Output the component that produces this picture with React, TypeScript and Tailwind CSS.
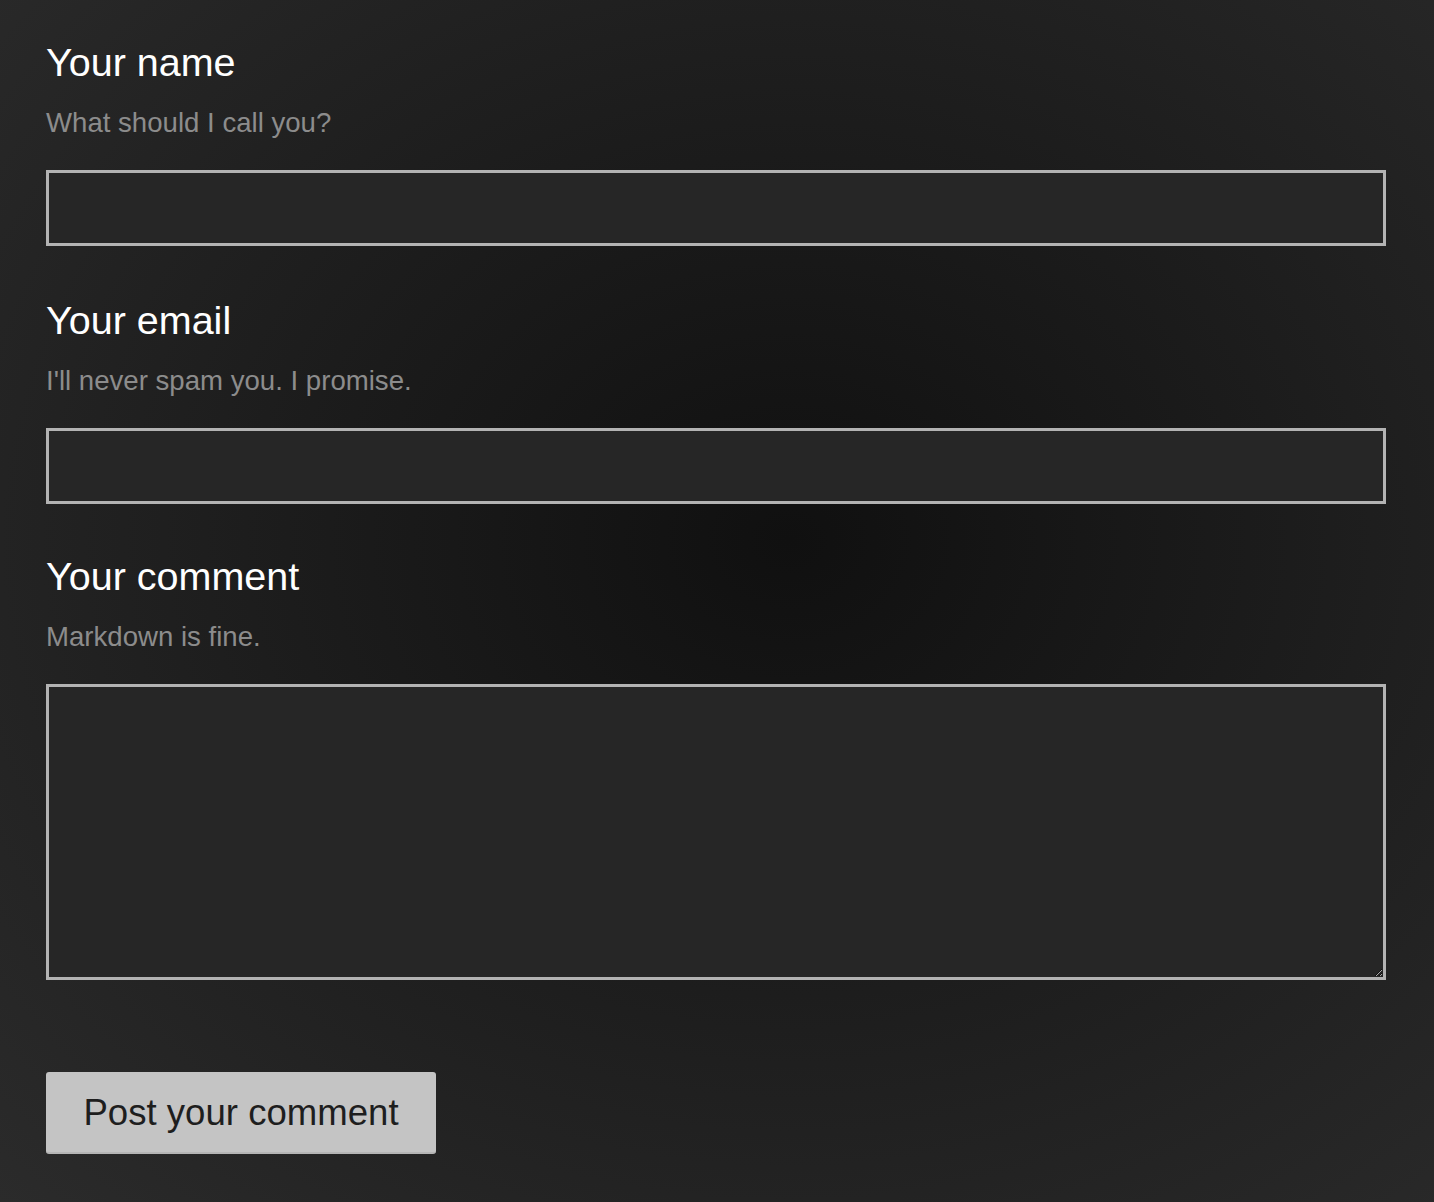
const fields = [
  { id: "name", title: "Your name", hint: "What should I call you?", kind: "input", gap: "" },
  { id: "email", title: "Your email", hint: "I'll never spam you. I promise.", kind: "input", gap: "mt-[50px]" },
  { id: "comment", title: "Your comment", hint: "Markdown is fine.", kind: "textarea", gap: "mt-[48px]" },
] as const;

export default function App() {
  return (
    <div
      className="min-h-screen bg-[radial-gradient(ellipse_at_55%_45%,#101010_0%,#1c1c1c_45%,#2b2b2b_100%)] pl-[46px] pr-[48px] pt-[38px] pb-[48px]"
      style={{ fontFamily: '"Liberation Sans", Arial, sans-serif' }}
    >
      <form className="flex flex-col">
        {fields.map((field) => (
          <div key={field.id} className={field.gap}>
            <label htmlFor={field.id} className="block text-[39.5px] leading-[48px] text-white">
              {field.title}
            </label>
            <p className="mt-[21px] text-[27.6px] leading-[32px] text-[#8c8c8c]">{field.hint}</p>
            {field.kind === "input" ? (
              <input
                id={field.id}
                type="text"
                className="mt-[31px] block h-[76px] w-full border-[3px] border-[#b3b3b3] bg-[#262626] px-3 text-[27px] text-white outline-none"
              />
            ) : (
              <textarea
                id={field.id}
                className="mt-[31px] block h-[296px] w-full border-[3px] border-[#b3b3b3] bg-[#262626] p-3 text-[27px] text-white outline-none"
              />
            )}
          </div>
        ))}
        <div className="mt-[92px]">
          <button
            type="button"
            className="h-[82px] w-[390px] rounded-[3px] border-b-2 border-[#b5b5b5] bg-[#c4c4c4] pt-[3px] text-[36.6px] text-[#1e1e1e]"
          >
            Post your comment
          </button>
        </div>
      </form>
    </div>
  );
}
